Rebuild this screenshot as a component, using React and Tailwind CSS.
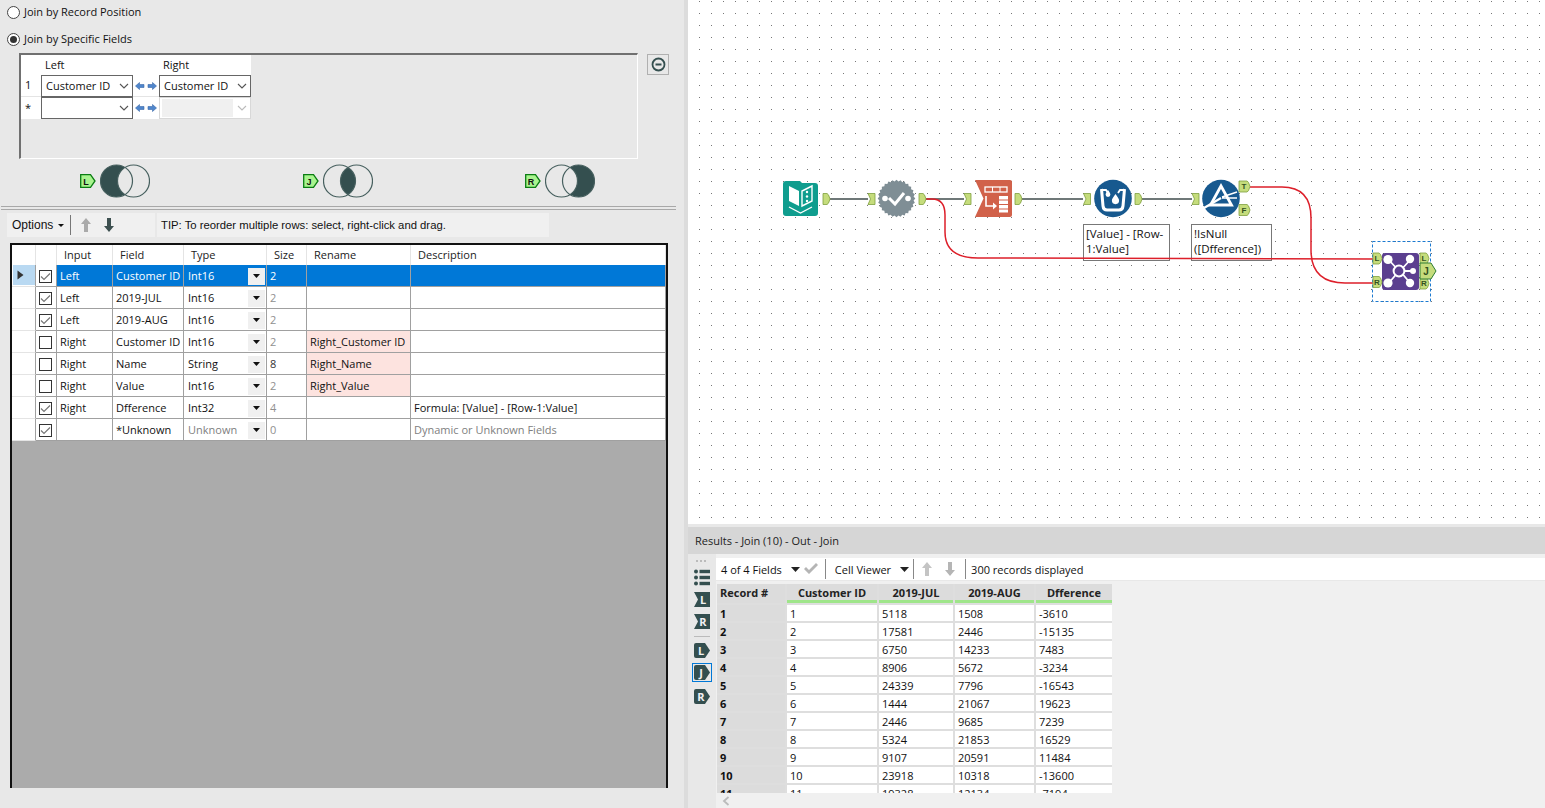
import React from 'react';

const fieldRows = [
    { on: true, input: 'Left', field: 'Customer ID', type: 'Int16', size: '2', selected: true },
    { on: true, input: 'Left', field: '2019-JUL', type: 'Int16', size: '2' },
    { on: true, input: 'Left', field: '2019-AUG', type: 'Int16', size: '2' },
    { on: false, input: 'Right', field: 'Customer ID', type: 'Int16', size: '2', rename: 'Right_Customer ID' },
    { on: false, input: 'Right', field: 'Name', type: 'String', size: '8', sizeDark: true, rename: 'Right_Name' },
    { on: false, input: 'Right', field: 'Value', type: 'Int16', size: '2', rename: 'Right_Value' },
    { on: true, input: 'Right', field: 'Dfference', type: 'Int32', size: '4', desc: 'Formula: [Value] - [Row-1:Value]' },
    { on: true, input: '', field: '*Unknown', type: 'Unknown', size: '0', desc: 'Dynamic or Unknown Fields', unknown: true },
];

const records = [
    ['1', '1', '5118', '1508', '-3610'],
    ['2', '2', '17581', '2446', '-15135'],
    ['3', '3', '6750', '14233', '7483'],
    ['4', '4', '8906', '5672', '-3234'],
    ['5', '5', '24339', '7796', '-16543'],
    ['6', '6', '1444', '21067', '19623'],
    ['7', '7', '2446', '9685', '7239'],
    ['8', '8', '5324', '21853', '16529'],
    ['9', '9', '9107', '20591', '11484'],
    ['10', '10', '23918', '10318', '-13600'],
    ['11', '11', '19328', '12134', '-7194'],
];

const gearPoints = Array.from({ length: 56 }, (_, i) => {
    const r = i % 2 === 0 ? 18.8 : 17.2;
    const a = (i / 56) * Math.PI * 2;
    return `${(896.5 + r * Math.cos(a)).toFixed(2)},${(198.5 + r * Math.sin(a)).toFixed(2)}`;
}).join(' ');

const Radio = ({ checked, label }) => (
    <div className="flex items-center h-6 pl-[7px] gap-[4px]">
        <span className="w-[13px] h-[13px] rounded-full border border-[#444] bg-white flex items-center justify-center">
            {checked && <span className="w-[7px] h-[7px] rounded-full bg-[#333]" />}
        </span>
        <span>{label}</span>
    </div>
);

const Chevron = ({ light }) => (
    <svg width="10" height="6" viewBox="0 0 10 6" className="shrink-0">
        <path d="M1 1l4 4 4-4" fill="none" stroke={light ? '#bbb' : '#555'} strokeWidth="1.1" />
    </svg>
);

const SwapArrows = () => (
    <svg width="22" height="8" viewBox="0 0 22 8">
        <path d="M0.5 4L4.5 0.5v2h4.5v3H4.5v2z" fill="#4f86cc" stroke="#3a68a8" strokeWidth="0.6" />
        <path d="M21.5 4L17.5 0.5v2h-4.5v3h4.5v2z" fill="#4f86cc" stroke="#3a68a8" strokeWidth="0.6" />
    </svg>
);

const Combo = ({ value, disabled }) => (
    <div className={`h-full w-full flex items-center justify-between pl-[4px] pr-[3px] border ${disabled ? 'border-[#d8d8d8]' : 'border-[#666]'} bg-white`}>
        {disabled ? <span className="w-[71px] h-[18px] -ml-[2px] bg-[#f0f0f0]" /> : <span>{value}</span>}
        <Chevron light={disabled} />
    </div>
);

const Tag = ({ letter }) => (
    <svg width="16" height="14" viewBox="0 0 16 14">
        <path d="M0.7 0.7H10.5L15 7l-4.5 6.3H0.7z" fill="#a9f48f" stroke="#0a7d12" strokeWidth="1.3" />
        <text x="6" y="10.5" fontSize="9" fontWeight="700" textAnchor="middle" fill="#111" fontFamily="'Liberation Sans', sans-serif">{letter}</text>
    </svg>
);

const Venn = ({ letter, part }) => (
    <div className="flex items-center gap-[4px] w-[70px]">
        <Tag letter={letter} />
        <svg width="50" height="34" viewBox="0 0 50 34">
            {part === 'left' && <path d="M25 3.45A16 16 0 1 0 25 30.55A16 16 0 0 1 25 3.45z" fill="#344f4f" />}
            {part === 'inner' && <path d="M25 3.45A16 16 0 0 1 25 30.55A16 16 0 0 1 25 3.45z" fill="#344f4f" />}
            {part === 'right' && <path d="M25 3.45A16 16 0 1 1 25 30.55A16 16 0 0 0 25 3.45z" fill="#344f4f" />}
            <circle cx="16.5" cy="17" r="16" fill="none" stroke="#47605f" strokeWidth="1.2" />
            <circle cx="33.5" cy="17" r="16" fill="none" stroke="#47605f" strokeWidth="1.2" />
        </svg>
    </div>
);

const Arrow = ({ up, color }) => (
    <svg width="12" height="16" viewBox="0 0 12 16">
        <path d={up ? 'M6 1l5 6H8v8H4V7H1z' : 'M6 15l5-6H8V1H4v8H1z'} fill={color} />
    </svg>
);

const Check = ({ on }) => (
    <span className="w-[13px] h-[13px] border border-[#333] bg-white flex items-center justify-center">
        {on && (
            <svg width="11" height="9" viewBox="0 0 11 9">
                <path d="M1 4.5l3 3 6-6" fill="none" stroke="#777" strokeWidth="1.2" />
            </svg>
        )}
    </span>
);

const FieldRow = ({ row }) => {
    const text = row.selected ? 'text-white' : 'text-[#111]';
    const line = 'border-r border-b border-[#a0a0a0] pt-px';
    const bg = row.selected ? 'bg-[#0078d7]' : 'bg-white';
    return (
        <div className={`grid grid-cols-[24px_21px_56px_71px_83px_40px_104px_255px] h-[22px] ${text}`}>
            <div className="border-r border-b border-[#a0a0a0] border-b-[#e4e4e4] bg-white pl-px pb-px">
                {row.selected && (
                    <div className="h-full bg-[#b9d9f2] flex items-center pl-[4px]">
                        <svg width="7" height="10" viewBox="0 0 7 10"><path d="M0.5 0.5L6.5 5 0.5 9.5z" fill="#333" /></svg>
                    </div>
                )}
            </div>
            <div className={`${line} bg-white flex items-center justify-center pr-px`}><Check on={row.on} /></div>
            <div className={`${line} ${bg} flex items-center pl-[3px]`}>{row.input}</div>
            <div className={`${line} ${bg} flex items-center pl-[3px] whitespace-nowrap`}>{row.field}</div>
            <div className={`${line} ${bg} flex items-center justify-between pl-[4px] pr-px`}>
                <span className={row.unknown ? 'text-[#808080]' : ''}>{row.type}</span>
                <span className="w-[17px] h-[17px] bg-[#f0f0f0] flex items-center justify-center">
                    <svg width="7" height="4" viewBox="0 0 7 4"><path d="M0 0h7L3.5 4z" fill="#111" /></svg>
                </span>
            </div>
            <div className={`${line} ${bg} flex items-center pl-[3px] ${row.selected ? 'text-white' : row.sizeDark ? 'text-[#333]' : 'text-[#909090]'}`}>{row.size}</div>
            <div className={`${line} ${row.rename ? 'bg-[#fde3df]' : bg} flex items-center pl-[3px] whitespace-nowrap`}>{row.rename}</div>
            <div className={`${line} ${bg} flex items-center pl-[3px] ${row.unknown ? 'text-[#808080]' : ''}`}>{row.desc}</div>
        </div>
    );
};

const LeftPanel = () => (
    <div className="w-[684px] shrink-0 flex flex-col">
        <Radio label="Join by Record Position" />
        <div className="mt-[3px]"><Radio checked label="Join by Specific Fields" /></div>

        <div className="mt-[2px] ml-[19px] flex items-start gap-[9px]">
            <div className="w-[619px] h-[106px] border-t-2 border-l-2 border-t-[#707070] border-l-[#707070] border-r border-b border-r-white border-b-white">
                <div className="grid grid-cols-[20px_92px_26px_92px] grid-rows-[20px_22px_22px] w-[230px]">
                    <div className="bg-white" />
                    <div className="bg-white flex items-center pl-[4px]">Left</div>
                    <div className="bg-white" />
                    <div className="bg-white flex items-center pl-[4px]">Right</div>
                    <div className="bg-white border-b border-[#e4e4e4] flex items-center pl-[4px]">1</div>
                    <Combo value="Customer ID" />
                    <div className="bg-white border-b border-[#e4e4e4] flex items-center justify-center"><SwapArrows /></div>
                    <Combo value="Customer ID" />
                    <div className="bg-white flex items-center pl-[4px]">*</div>
                    <Combo />
                    <div className="bg-white flex items-center justify-center"><SwapArrows /></div>
                    <Combo disabled />
                </div>
            </div>
            <div className="mt-px w-[22px] h-[21px] border border-[#b0b0b0] flex items-center justify-center">
                <svg width="15" height="15" viewBox="0 0 15 15">
                    <circle cx="7.5" cy="7.5" r="6" fill="none" stroke="#344f4f" strokeWidth="1.8" />
                    <path d="M4.5 7.5h6" stroke="#344f4f" strokeWidth="2" />
                </svg>
            </div>
        </div>

        <div className="mt-[5px] ml-[80px] w-[515px] h-[34px] flex justify-between">
            <Venn letter="L" part="left" />
            <Venn letter="J" part="inner" />
            <Venn letter="R" part="right" />
        </div>

        <div className="mt-[8px] ml-px w-[675px] h-[4px] border-t border-b border-[#a8a8a8]" />

        <div className="mt-[3px] ml-[7px] flex h-6 gap-[2px]">
            <div className="w-[148px] bg-[#f0f0f0] flex items-center pl-[5px] font-['Liberation_Sans',sans-serif] text-[12px]">
                <span>Options</span>
                <svg width="6" height="3" viewBox="0 0 6 3" className="ml-[5px]"><path d="M0 0h6L3 3z" fill="#111" /></svg>
                <span className="ml-[6px] w-px h-[20px] bg-[#777]" />
                <span className="ml-[9px] flex"><Arrow up color="#aaa" /></span>
                <span className="ml-[11px] flex"><Arrow color="#3d5050" /></span>
            </div>
            <div className="w-[392px] bg-[#f0f0f0] flex items-center pl-[4px] font-['Liberation_Sans',sans-serif] text-[11.3px]">
                TIP: To reorder multiple rows: select, right-click and drag.
            </div>
        </div>

        <div className="mt-[6px] ml-[10px] w-[658px] h-[545px] border-2 border-b-0 border-[#111] bg-[#ababab]">
            <div className="grid grid-cols-[24px_21px_56px_71px_83px_40px_104px_255px] h-5 bg-white text-[#222]">
                <div className="border-r border-[#e4e4e4]" />
                <div className="border-r border-[#e4e4e4]" />
                {['Input', 'Field', 'Type', 'Size', 'Rename', 'Description'].map((h) => (
                    <div key={h} className="border-r border-[#e4e4e4] flex items-center pl-[7px]">{h}</div>
                ))}
            </div>
            {fieldRows.map((row, i) => <FieldRow key={i} row={row} />)}
        </div>
    </div>
);

const Anchor = ({ x, y, out, label, w = 7, h = 11 }) => (
    <g>
        {out
            ? <path d={`M${x} ${y}h${w - 3}q1.5 0 3 ${h / 2}q-1.5 ${h / 2} -3 ${h / 2}h-${w - 3}z`} fill="#c5dc7c" stroke="#7f9f3f" strokeWidth="0.8" />
            : <path d={`M${x} ${y}h${w}v${h}h-${w}l2.5 -${h / 2}z`} fill="#c5dc7c" stroke="#7f9f3f" strokeWidth="0.8" />}
        {label && <text x={x + w / 2 - 0.5} y={y + h / 2 + 2.8} fontSize="8" fontWeight="700" textAnchor="middle" fill="#33501f" fontFamily="'Liberation Sans', sans-serif">{label}</text>}
    </g>
);

// drawn in page coordinates, the canvas starts at x=688
const Workflow = () => (
    <svg className="absolute left-0 top-0" width="857" height="524" viewBox="688 0 857 524">
        {/* wires */}
        <g stroke="#6f7878" strokeWidth="2" fill="none">
            <path d="M830 199H868" />
            <path d="M926 199H964" />
            <path d="M1022 199H1083" />
            <path d="M1142 199H1192" />
        </g>
        <g stroke="#dd1f2a" strokeWidth="1.5" fill="none">
            <path d="M926 199H932Q945 199 945 215V232Q945 258 978 258L1373 259" />
            <path d="M1250 187H1282Q1311 187 1311 218V250Q1311 283 1345 283H1373" />
        </g>

        {/* input */}
        <path d="M786 181H800l2 2H815q3 0 3 3V213q0 3 -3 3H786q-3 0 -3 -3V184q0 -3 3 -3z" fill="#0f9d8e" />
        <path d="M789 186l10 5V206l-10-5z" fill="#fff" />
        <path d="M812 186l-10 5V206l10-5z" fill="none" stroke="#fff" strokeWidth="1.4" />
        <path d="M789 207l11.5 6 11.5-6" fill="none" stroke="#fff" strokeWidth="1.4" />
        <g fill="#fff"><circle cx="807" cy="192" r="1.2" /><circle cx="807" cy="196.5" r="1.2" /><circle cx="807" cy="201" r="1.2" /></g>

        {/* sample */}
        <polygon points={gearPoints} fill="#7f8e95" />
        <circle cx="885" cy="198.5" r="2.8" fill="#fff" />
        <circle cx="908" cy="198.5" r="2.8" fill="#fff" />
        <path d="M889 198l6 6 9-11" fill="none" stroke="#fff" strokeWidth="3" />

        {/* select */}
        <path d="M975 180H1010q2 0 2 2V215q0 2 -2 2H975l8.5 -18.5z" fill="#d1614a" />
        <rect x="985" y="187" width="22" height="5" fill="none" stroke="#fff" strokeWidth="1.3" />
        <path d="M992.5 187v5M1000 187v5" stroke="#fff" strokeWidth="1" />
        <path d="M986 196v10h8" fill="none" stroke="#fff" strokeWidth="1.6" />
        <path d="M993 202.5l4 3.5-4 3.5z" fill="#fff" />
        <g fill="#fff"><rect x="999" y="196" width="9" height="3.5" /><rect x="999" y="200.5" width="9" height="3.5" /><rect x="999" y="205" width="9" height="3.5" /><rect x="999" y="209.5" width="9" height="3" /></g>

        {/* formula */}
        <circle cx="1113" cy="198.5" r="18.8" fill="#17598f" />
        <path d="M1101.5 189l1.5 17q0.4 4 4 4H1119q3.6 0 4-4l1.5-17" fill="none" stroke="#fff" strokeWidth="3" />
        <path d="M1101 190h5l2 3M1125 190h-5l-2 3" fill="none" stroke="#fff" strokeWidth="1.8" />
        <path d="M1108 190c1.6 2.4 2.4 3.4 2.4 4.6a2.4 2.4 0 0 1-4.8 0c0-1.2.8-2.2 2.4-4.6z" fill="#fff" />
        <path d="M1115.5 194c2.4 3.4 3.6 4.8 3.6 6.6a3.6 3.6 0 0 1-7.2 0c0-1.8 1.2-3.2 3.6-6.6z" fill="#fff" />

        {/* filter */}
        <circle cx="1221" cy="198.5" r="18.8" fill="#17598f" />
        <path d="M1221 186l10.5 19h-21z" fill="none" stroke="#fff" strokeWidth="2.8" />
        <path d="M1204 208l17-10" stroke="#fff" strokeWidth="2.2" />
        <path d="M1222 197l15-5M1222 198l15 0" stroke="#fff" strokeWidth="1.4" />

        {/* join */}
        <rect x="1372.5" y="241.5" width="58" height="60" fill="none" stroke="#1c7ad0" strokeWidth="1" strokeDasharray="3 2" />
        <rect x="1382" y="253" width="37" height="37" rx="3" fill="#5b3f8f" />
        <g stroke="#fff" strokeWidth="1.8">
            <path d="M1388 259l11 12M1411 259l-11 12M1388 284l11-13M1411 284l-11-13M1400 271h13" />
        </g>
        <circle cx="1399" cy="271" r="5.4" fill="#5b3f8f" stroke="#fff" strokeWidth="2" />
        <g fill="#fff">
            <circle cx="1388" cy="259.5" r="4.6" /><circle cx="1410" cy="259" r="4.2" /><circle cx="1413" cy="271" r="3" />
            <circle cx="1388" cy="283" r="4.6" /><circle cx="1410" cy="283" r="4.2" />
        </g>

        {/* anchors */}
        <Anchor x={823} y={193.5} out />
        <Anchor x={868} y={193.5} />
        <Anchor x={919} y={193.5} out />
        <Anchor x={964} y={193.5} />
        <Anchor x={1015} y={193.5} out />
        <Anchor x={1083.5} y={193.5} />
        <Anchor x={1135} y={193.5} out />
        <Anchor x={1192} y={193.5} />
        <Anchor x={1239} y={181} out label="T" w={11} />
        <Anchor x={1239} y={204.5} out label="F" w={11} />
        <Anchor x={1373} y={253} out label="L" w={9} />
        <Anchor x={1373} y={276.5} out label="R" w={9} />
        <Anchor x={1420} y={253} out label="L" w={9} />
        <Anchor x={1420} y={278} out label="R" w={9} />
        <path d="M1420 263h11l5 8-5 8h-11z" fill="#c5dc7c" stroke="#2e7d32" strokeWidth="1" />
        <text x="1426" y="274.5" fontSize="10" fontWeight="700" textAnchor="middle" fill="#33501f" fontFamily="'Liberation Sans', sans-serif">J</text>
    </svg>
);

const Annotation = ({ className, children }) => (
    <div className={`absolute top-[224px] h-[37px] border border-[#777] bg-white px-[2px] pt-px leading-[15px] text-[11.5px] text-[#111] whitespace-nowrap ${className}`}>{children}</div>
);

const SideTag = ({ letter, notch }) => (
    <svg width="16" height="15" viewBox="0 0 16 15">
        <path d={notch ? 'M0 0H16V15H0l4-7.5z' : 'M2 0H11l5 7.5-5 7.5H2q-2 0-2-2V2q0-2 2-2z'} fill="#344f4f" />
        <text x={notch ? 9 : 7} y="11.5" fontSize="11" fontWeight="700" textAnchor="middle" fill="#f2f2f2" fontFamily="'Open Sans', sans-serif">{letter}</text>
    </svg>
);

const ResultsSidebar = () => (
    <div className="w-7 shrink-0 flex flex-col items-center pt-[6px]">
        <div className="flex gap-[2px] -ml-[2px]">
            <span className="w-[2px] h-[2px] bg-[#bbb]" /><span className="w-[2px] h-[2px] bg-[#bbb]" /><span className="w-[2px] h-[2px] bg-[#bbb]" />
        </div>
        <svg width="16" height="17" viewBox="0 0 16 17" className="mt-[7px]">
            <g fill="#344f4f">
                <circle cx="2" cy="2.5" r="2" /><rect x="5.5" y="0.8" width="10.5" height="3.4" />
                <circle cx="2" cy="8.5" r="2" /><rect x="5.5" y="6.8" width="10.5" height="3.4" />
                <circle cx="2" cy="14.5" r="2" /><rect x="5.5" y="12.8" width="10.5" height="3.4" />
            </g>
        </svg>
        <div className="mt-[6px] flex"><SideTag letter="L" notch /></div>
        <div className="mt-[7px] flex"><SideTag letter="R" notch /></div>
        <div className="mt-[7px] w-4 h-px bg-[#bbb]" />
        <div className="mt-[6px] flex"><SideTag letter="L" /></div>
        <div className="mt-[5px] w-5 h-[19px] border border-[#0078d7] flex items-center justify-center"><SideTag letter="J" /></div>
        <div className="mt-[7px] flex"><SideTag letter="R" /></div>
    </div>
);

const Caret = () => (
    <svg width="9" height="5" viewBox="0 0 9 5"><path d="M0 0h9L4.5 5z" fill="#222" /></svg>
);

const Results = () => (
    <div className="h-[281px] flex flex-col mt-[3px]">
        <div className="h-[27px] shrink-0 bg-[#d6d6d6] flex items-center pl-[7px] pt-px text-[#222]">Results - Join (10) - Out - Join</div>
        <div className="flex-1 flex min-h-0">
            <ResultsSidebar />
            <div className="flex-1 flex flex-col min-w-0 bg-[#f0f0f0]">
                <div className="mt-[4px] h-[23px] shrink-0 bg-white border-b border-[#e8e8e8] flex items-center pl-[5px]">
                    <span className="pt-[2px]">4 of 4 Fields</span>
                    <span className="ml-[9px] flex"><Caret /></span>
                    <svg width="16" height="12" viewBox="0 0 16 12" className="ml-[3px]"><path d="M1 6l5 5 9-9-2-2-7 7-3-3z" fill="#b5b5b5" /></svg>
                    <span className="ml-[6px] w-px h-[20px] bg-[#888]" />
                    <span className="ml-[9px] pt-[2px]">Cell Viewer</span>
                    <span className="ml-[9px] flex"><Caret /></span>
                    <span className="ml-[4px] w-px h-[20px] bg-[#888]" />
                    <span className="ml-[7px] flex"><Arrow up color="#c4c4c4" /></span>
                    <span className="ml-[11px] flex"><Arrow color="#b5b5b5" /></span>
                    <span className="ml-[9px] w-px h-[20px] bg-[#888]" />
                    <span className="ml-[5px] pt-[2px]">300 records displayed</span>
                </div>
                <div className="flex-1 min-h-0 overflow-hidden pl-px pt-[3px]">
                    <div className="w-[395px] grid grid-cols-[68px_90px_74px_79px_76px] grid-rows-[19px] auto-rows-[16px] gap-[2px] bg-[#dedede]">
                        <div className="bg-[#dcdcdc] flex items-center pl-[3px] font-bold text-[#222]">Record #</div>
                        {['Customer ID', '2019-JUL', '2019-AUG', 'Dfference'].map((h) => (
                            <div key={h} className="bg-[#dcdcdc] border-b-[3px] border-[#9fe58a] pt-[3px] flex items-center justify-center font-bold text-[#222]">{h}</div>
                        ))}
                        {records.map((r) => (
                            <React.Fragment key={r[0]}>
                                <div className="bg-[#dcdcdc] flex items-center pl-[3px] pt-[2px] font-bold">{r[0]}</div>
                                {r.slice(1).map((v, i) => (
                                    <div key={i} className="bg-white flex items-center pl-[3px] pt-[2px]">{v}</div>
                                ))}
                            </React.Fragment>
                        ))}
                    </div>
                </div>
                <div className="h-[15px] shrink-0 bg-[#f0f0f0] flex items-center pl-[6px]">
                    <svg width="8" height="10" viewBox="0 0 8 10"><path d="M6.5 1L2 5l4.5 4" fill="none" stroke="#bbb" strokeWidth="1.8" /></svg>
                </div>
            </div>
        </div>
    </div>
);

const App = () => (
    <div className="w-[1545px] h-[808px] overflow-hidden flex bg-[#e8e8e8] font-['Open_Sans',sans-serif] text-[11px] text-[#111]">
        <LeftPanel />
        <div className="w-1 shrink-0 bg-[#dcdcdc]" />
        <div className="w-[857px] shrink-0 flex flex-col">
            <div className="relative h-[524px] shrink-0 bg-white bg-[radial-gradient(circle_at_0.5px_0.5px,#777_0.6px,transparent_0.8px)] bg-[length:12px_12px] bg-[position:11px_1px]">
                <Annotation className="left-[395px] w-[87px]">[Value] - [Row-<br />1:Value]</Annotation>
                <Annotation className="left-[503px] w-[81px]">!IsNull<br />([Dfference])</Annotation>
                <Workflow />
            </div>
            <Results />
        </div>
    </div>
);

export default App;
